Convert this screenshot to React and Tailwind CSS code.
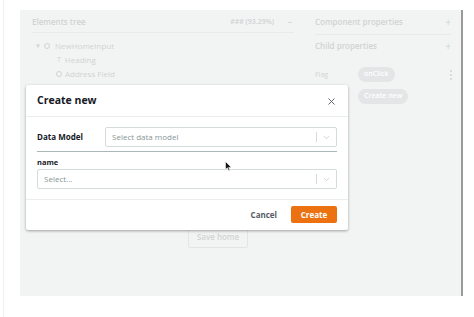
import { ChevronDown, X } from 'lucide-react';

const faint = 'text-[#d0d3d4]';

const Select = ({ placeholder, className = '' }) => (
    <div className={`flex items-center h-[20px] border border-[#d5dbdb] rounded-[2px] bg-white ${className}`}>
        <span className="flex-1 pl-[6px] text-[8px] text-[#879596]">{placeholder}</span>
        <span className="w-px h-[10px] bg-[#d5dbdb]" />
        <span className="w-[19px] flex justify-center">
            <ChevronDown size={9} strokeWidth={1.5} className="text-[#aab7b8]" />
        </span>
    </div>
);

const Pill = ({ children }) => (
    <span className="inline-flex items-center h-[15px] px-[6px] rounded-full bg-[#e4e5e6] text-white text-[7px] font-semibold">
        {children}
    </span>
);

export default function App() {
    return (
        <div
            className="relative w-[474px] h-[317px] bg-white overflow-hidden"
            style={{ fontFamily: '"Open Sans", "Noto Sans", sans-serif' }}
        >
            <div className="ml-[3px] h-full border-l border-[#f0f0f0] pt-[10px] pl-[16px]">
                {/* Background editor panel */}
                <div className="flex w-[443px] h-[286px] bg-[#f2f3f3] border-r-2 border-[#9a9a9a]">
                    {/* Elements tree */}
                    <div className={`w-[284px] pl-[12px] pr-[10px] ${faint}`}>
                        <div className="flex items-center h-[21px] mt-[2px] border-b border-[#e9eaea] text-[8px] font-semibold">
                            <span>Elements tree</span>
                            <span className="ml-auto text-[7px]">### (93.29%)</span>
                            <span className="ml-[14px] mr-[2px]">–</span>
                        </div>
                        <div className="pt-[6px] text-[8px] leading-[14px]">
                            <div className="flex items-center gap-[3px] pl-[3px]">
                                <span className="text-[6px]">▼</span>
                                <span className="w-[6px] h-[6px] rounded-full border border-[#d0d3d4]" />
                                <span className="ml-[2px]">NewHomeInput</span>
                            </div>
                            <div className="flex items-center gap-[4px] pl-[25px]">
                                <span className="text-[7px]">T</span>
                                <span>Heading</span>
                            </div>
                            <div className="flex items-center gap-[3px] pl-[24px]">
                                <span className="w-[6px] h-[6px] rounded-full border border-[#d0d3d4]" />
                                <span>Address Field</span>
                            </div>
                            <div className="flex items-center gap-[3px] pl-[24px]">
                                <span className="w-[6px] h-[6px] rounded-full border border-[#d0d3d4]" />
                                <span>Save Button</span>
                            </div>
                        </div>
                        <div className="flex mt-[131px] pl-[156px]">
                            <span className="flex items-center justify-center w-[60px] h-[22px] border border-[#e3e4e4] rounded-[2px] text-[8px] font-semibold">
                                Save home
                            </span>
                        </div>
                    </div>

                    {/* Properties */}
                    <div className={`flex-1 pl-[11px] pr-[10px] ${faint}`}>
                        <div className="flex items-center h-[25px] border-b border-[#e9eaea] text-[8px] font-semibold">
                            <span>Component properties</span>
                            <span className="ml-auto text-[10px] font-normal">+</span>
                        </div>
                        <div className="flex items-center h-[22px] text-[8px] font-semibold">
                            <span>Child properties</span>
                            <span className="ml-auto text-[10px] font-normal">+</span>
                        </div>
                        <div className="flex mt-[10px]">
                            <span className="w-[43px] pt-[3px] text-[7px]">Flag</span>
                            <div className="flex flex-col items-start gap-[7px]">
                                <Pill>onClick</Pill>
                                <Pill>Create new</Pill>
                            </div>
                            <span className="ml-auto flex flex-col gap-[2px] pt-[3px] pr-[0px] mr-[-1px]">
                                <span className="w-[2px] h-[2px] rounded-full bg-[#d0d3d4]" />
                                <span className="w-[2px] h-[2px] rounded-full bg-[#d0d3d4]" />
                                <span className="w-[2px] h-[2px] rounded-full bg-[#d0d3d4]" />
                            </span>
                        </div>
                    </div>
                </div>
            </div>

            {/* Modal */}
            <div className="absolute left-[26px] top-[85px] w-[322px] h-[145px] bg-white rounded-[2px] shadow-[0_1px_3px_rgba(0,0,0,0.35)] flex flex-col">
                <div className="flex items-center h-[32px] px-[11px] pt-[1px] border-b border-[#eaeded]">
                    <span className="text-[10.5px] font-bold text-[#16191f]">Create new</span>
                    <X size={11} strokeWidth={2} className="ml-auto text-[#545b64]" />
                </div>
                <div className="px-[11px] pt-[10px]">
                    <div className="flex items-center">
                        <span className="w-[68px] text-[8px] font-bold text-[#16191f]">Data Model</span>
                        <Select placeholder="Select data model" className="flex-1" />
                    </div>
                    <div className="mt-[4px] border-t border-[#aab7b8]" />
                    <div className="mt-[5px] text-[7.5px] font-bold text-[#16191f] leading-[10px]">name</div>
                    <Select placeholder="Select..." className="mt-[2px]" />
                </div>
                <div className="mt-[10px] border-t border-[#eaeded]" />
                <div className="flex items-center justify-end gap-[14px] px-[11px] pt-[6px]">
                    <span className="text-[8px] font-bold text-[#545b64]">Cancel</span>
                    <span className="flex items-center justify-center w-[46px] h-[17px] bg-[#ec7211] rounded-[2px] text-[8px] font-bold text-white">
                        Create
                    </span>
                </div>
            </div>

            {/* Mouse cursor */}
            <svg className="absolute left-[225px] top-[161px]" width="7" height="11" viewBox="0 0 7 11">
                <path d="M0.5 0.5 L0.5 8.5 L2.4 6.8 L3.7 9.8 L4.9 9.3 L3.7 6.4 L6.3 6.4 Z" fill="#111" stroke="#fff" strokeWidth="0.6" />
            </svg>
        </div>
    );
}
